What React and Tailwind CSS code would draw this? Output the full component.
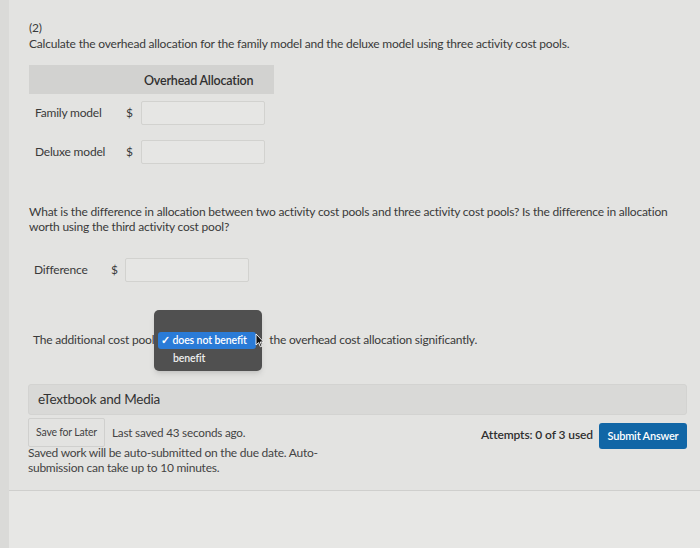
import React from "react";

function Cursor() {
  return (
    <svg width="10" height="15" viewBox="0 0 10 15" className="absolute left-[255px] top-[333px]">
      <path d="M1 1 L1 12 L3.6 9.6 L5.4 13.8 L7 13.1 L5.2 9 L8.6 9 Z" fill="#111" stroke="#fff" strokeWidth="0.9" strokeLinejoin="round" />
    </svg>
  );
}

function Input() {
  return <div className="h-[24px] w-[124px] border border-[#d2d2cf] bg-[#e6e6e4] rounded-[2px]" />;
}

export default function App() {
  return (
    <div
      className="relative w-[700px] h-[548px] overflow-hidden bg-[#e3e3e1] text-[#3a3a3a] border-l-[9px] border-[#dadad8]"
      style={{ fontFamily: "Lato, 'Open Sans', sans-serif" }}
    >
      <div className="pl-[20px] pr-[13px] pt-[20px]">
        <div className="text-[12px] leading-[16px] tracking-[-0.2px]">(2)</div>
        <div className="text-[12px] leading-[16px] tracking-[-0.2px]">
          Calculate the overhead allocation for the family model and the deluxe model using three activity cost pools.
        </div>

        <div className="mt-[13px] w-[245px] h-[29px] bg-[#d2d2d0] flex items-center pt-[3px] pl-[115px] text-[12.5px] font-semibold tracking-[-0.2px] text-[#2f2f2f]">
          Overhead Allocation
        </div>

        <div className="mt-[7px] flex items-center h-[24px] text-[12px] tracking-[-0.2px]">
          <span className="ml-[6px] w-[91px]">Family model</span>
          <span className="w-[15px]">$</span>
          <Input />
        </div>
        <div className="mt-[15px] flex items-center h-[24px] text-[12px] tracking-[-0.2px]">
          <span className="ml-[6px] w-[91px]">Deluxe model</span>
          <span className="w-[15px]">$</span>
          <Input />
        </div>

        <div className="mt-[40px] text-[12px] leading-[15px] tracking-[-0.2px] pr-[10px]">
          What is the difference in allocation between two activity cost pools and three activity cost pools? Is the difference in allocation worth using the third activity cost pool?
        </div>

        <div className="mt-[24px] flex items-center h-[24px] text-[12px] tracking-[-0.2px]">
          <span className="ml-[5px] w-[77px]">Difference</span>
          <span className="w-[14px]">$</span>
          <Input />
        </div>

        <div className="mt-[50px] flex items-center h-[16px] text-[12px] tracking-[-0.2px]">
          <span className="ml-[4px]">The additional cost pool</span>
          <span className="w-[115px]" />
          <span>the overhead cost allocation significantly.</span>
        </div>

        <div className="mt-[36px] h-[31px] w-[659px] -ml-[1px] bg-[#d9d9d7] rounded-[3px] border border-[#d3d3d1] flex items-center pl-[9px] text-[13.5px] tracking-[-0.2px] text-[#333]">
          eTextbook and Media
        </div>

        <div className="mt-[3px] flex items-start -ml-[1px] w-[659px]">
          <div className="h-[29px] w-[77px] border border-[#d0d0ce] rounded-[2px] flex items-center justify-center text-[10.5px] tracking-[-0.2px] text-[#444]">
            Save for Later
          </div>
          <div className="ml-[7px] h-[29px] flex items-center text-[11.7px] tracking-[-0.2px] text-[#444]">
            Last saved 43 seconds ago.
          </div>
          <div className="ml-auto h-[33px] flex items-center">
            <span className="text-[12px] font-semibold tracking-[-0.1px] text-[#2f2f2f]">Attempts: 0 of 3 used</span>
            <div className="ml-[6px] mt-[3px] h-[26px] w-[88px] bg-[#1166a6] rounded-[3px] flex items-center justify-center text-white text-[11px] font-semibold tracking-[-0.2px]">
              Submit Answer
            </div>
          </div>
        </div>
        <div className="-mt-[6px] -ml-[1px] w-[305px] text-[12px] leading-[15px] tracking-[-0.25px] text-[#444]">
          Saved work will be auto-submitted on the due date. Auto-submission can take up to 10 minutes.
        </div>
      </div>

      <div className="absolute left-0 right-0 top-[490px] bottom-0 border-t border-[#cfcfcd] bg-[#e7e7e5]" />

      {/* dropdown popup */}
      <div className="absolute left-[145px] top-[310px] w-[108px] h-[61px] rounded-[5px] bg-[#505050] shadow-md">
        <div className="absolute left-[4px] top-[22px] w-[98px] h-[17px] rounded-[3px] bg-[#2a7bd7] flex items-center pl-[3px] text-white text-[10.5px] font-semibold tracking-[-0.1px]">
          ✓ does not benefit
        </div>
        <div className="absolute left-[19px] top-[41px] text-[#eee] text-[10.5px] font-semibold tracking-[-0.1px]">benefit</div>
      </div>
      <div className="absolute left-[-9px] top-0">
        <Cursor />
      </div>
    </div>
  );
}
